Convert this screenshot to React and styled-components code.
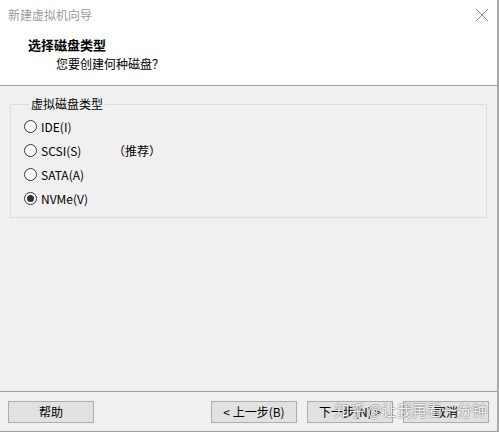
import React from "react";
import styled, { createGlobalStyle } from "styled-components";

const GlobalStyle = createGlobalStyle`
  html, body {
    margin: 0;
    padding: 0;
    background: #f0f0f0;
  }
  body {
    font-family: "Noto Sans CJK SC", "Noto Sans", sans-serif;
    font-size: 12px;
    color: #000;
  }
`;

const Window = styled.div`
  position: relative;
  width: 499px;
  height: 432px;
  box-sizing: border-box;
  display: flex;
  flex-direction: column;
  background: #f0f0f0;
  border-right: 2px solid #a9a9a9;
  border-bottom: 1px solid #a0a0a0;
  overflow: hidden;
`;

const TitleBar = styled.div`
  height: 30px;
  flex: none;
  display: flex;
  align-items: center;
  justify-content: space-between;
  padding: 0 8px;
  background: #fff;
`;

const TitleText = styled.span`
  color: #9a9a9a;
  font-size: 12px;
  line-height: 16px;
`;

const Header = styled.div`
  height: 56px;
  flex: none;
  box-sizing: border-box;
  padding: 5px 0 0 28px;
  background: #fff;
  border-bottom: 1px solid #a0a0a0;
`;

const HeaderTitle = styled.div`
  font-size: 13px;
  font-weight: bold;
  line-height: 19px;
`;

const HeaderSub = styled.div`
  padding-left: 28px;
  font-size: 12px;
  line-height: 19px;
`;

const Body = styled.div`
  flex: 1;
  padding: 11px 10px 0 10px;
`;

const Group = styled.fieldset`
  margin: 0;
  height: 121px;
  box-sizing: border-box;
  padding: 3px 0 0 13px;
  border: 1px solid #dcdcdc;
  position: relative;
`;

const Legend = styled.legend`
  padding: 0 2px;
  margin-left: 5px;
  font-size: 12px;
  line-height: 14px;
`;

const Option = styled.label`
  display: flex;
  align-items: center;
  height: 24px;
  font-size: 12px;
`;

const Radio = styled.span`
  width: 13px;
  height: 13px;
  box-sizing: border-box;
  border: 1px solid #333;
  border-radius: 50%;
  background: #fff;
  display: flex;
  align-items: center;
  justify-content: center;
  margin-right: 4px;
  &::after {
    content: "";
    width: 7px;
    height: 7px;
    border-radius: 50%;
    background: ${(p) => (p.checked ? "#333" : "transparent")};
  }
`;

const OptionText = styled.span`
  width: 72px;
`;

const Note = styled.span``;

const Footer = styled.div`
  height: 40px;
  flex: none;
  box-sizing: border-box;
  border-top: 1px solid #a0a0a0;
  padding: 9px 8px 0 8px;
  display: flex;
  gap: 10px;
`;

const Button = styled.button`
  width: 86px;
  height: 22px;
  box-sizing: border-box;
  margin: 0;
  padding: 0;
  margin-left: ${(p) => (p.$push ? "auto" : "0")};
  background: #e1e1e1;
  border: 1px solid #adadad;
  font-family: "Noto Sans CJK SC", "Noto Sans", sans-serif;
  font-size: 12px;
  line-height: 18px;
  color: #000;
`;

const Watermark = styled.div`
  position: absolute;
  right: 10px;
  bottom: 11px;
  font-size: 15px;
  color: rgba(255, 255, 255, 0.9);
  text-shadow: 1px 0 0 rgba(0, 0, 0, 0.2), -1px 0 0 rgba(0, 0, 0, 0.2),
    0 1px 0 rgba(0, 0, 0, 0.2), 0 -1px 0 rgba(0, 0, 0, 0.2);
  pointer-events: none;
`;

const CloseIcon = () => (
  <svg width="14" height="14" viewBox="0 0 14 14">
    <path d="M1 1 L13 13 M13 1 L1 13" stroke="#8c8c8c" strokeWidth="1" />
  </svg>
);

const options = [
  { label: "IDE(I)" },
  { label: "SCSI(S)", note: "（推荐）" },
  { label: "SATA(A)" },
  { label: "NVMe(V)", checked: true },
];

export default function App() {
  return (
    <>
      <GlobalStyle />
      <Window>
        <TitleBar>
          <TitleText>新建虚拟机向导</TitleText>
          <CloseIcon />
        </TitleBar>
        <Header>
          <HeaderTitle>选择磁盘类型</HeaderTitle>
          <HeaderSub>您要创建何种磁盘？</HeaderSub>
        </Header>
        <Body>
          <Group>
            <Legend>虚拟磁盘类型</Legend>
            {options.map((o) => (
              <Option key={o.label}>
                <Radio checked={o.checked} />
                <OptionText>{o.label}</OptionText>
                {o.note && <Note>{o.note}</Note>}
              </Option>
            ))}
          </Group>
        </Body>
        <Footer>
          <Button>帮助</Button>
          <Button $push>&lt; 上一步(B)</Button>
          <Button>下一步(N) &gt;</Button>
          <Button>取消</Button>
        </Footer>
        <Watermark>知乎 @让我再看一分钟</Watermark>
      </Window>
    </>
  );
}
